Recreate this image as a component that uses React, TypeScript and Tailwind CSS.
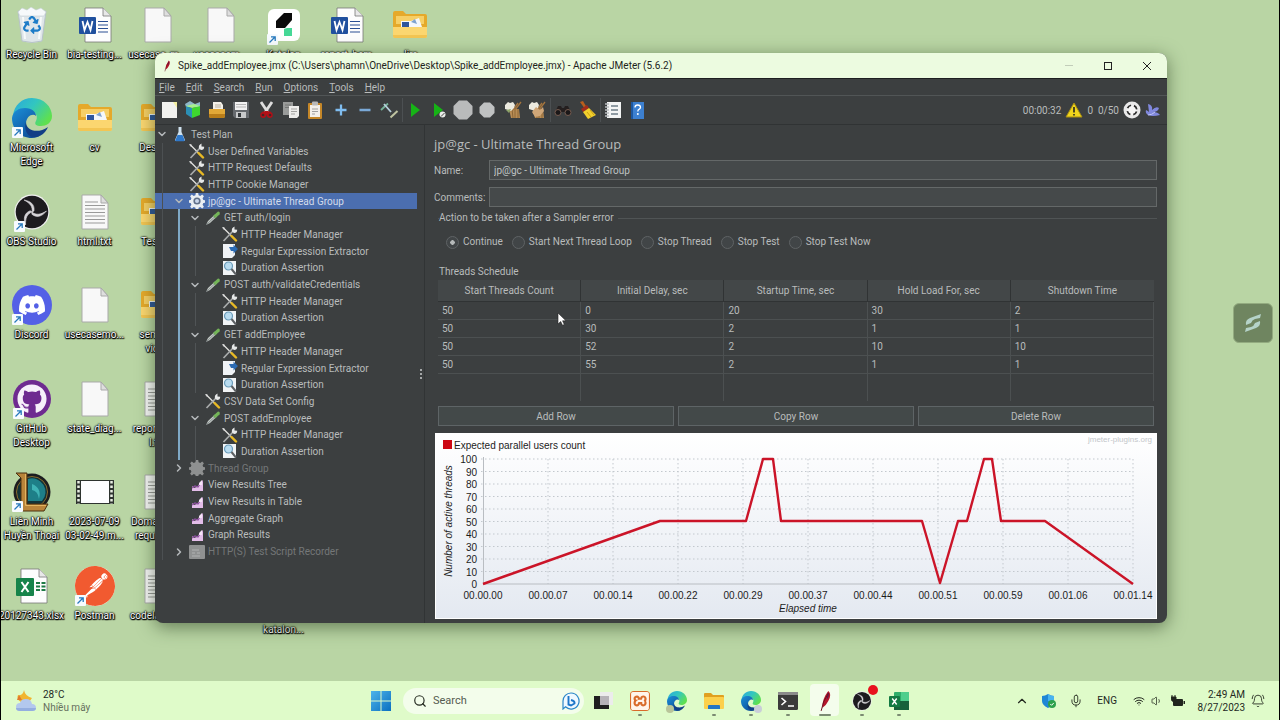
import React, { useState } from "react";
import { FaGithub, FaRecycle } from "react-icons/fa";
import { SiDiscord, SiPostman, SiXampp } from "react-icons/si";
import { Mic, Search, Wifi, Volume1, ChevronUp, ChevronDown, ChevronRight, BellRing } from "lucide-react";

/* ---------- desktop icons ---------- */

function Shortcut() {
  return (
    <svg viewBox="0 0 11 11" className="absolute bottom-0 left-0 size-[11px]">
      <rect width="11" height="11" rx="1" fill="#f7fbff" />
      <path d="M2.5 8.5 L8 3 M4 2.8 H8.2 V7" stroke="#2779bd" strokeWidth="1.3" fill="none" />
    </svg>
  );
}

function Folder() {
  return (
    <svg viewBox="0 0 36 30" className="h-[30px] w-9">
      <path d="M1 3 q0-2 2-2 h8 l3 3 h19 q2 0 2 2 v20 H1z" fill="#e5a92b" />
      <path d="M4 6 h28 v8 H4z" fill="#f6cf66" />
      <path d="M9 11 h10 l8-3 l3 9 h-21z" fill="#f4f7fb" />
      <rect x="10" y="12" width="7" height="6" fill="#2f569b" />
      <path d="M19 12 l4-3 l2 5z" fill="#7ea2cf" />
      <path d="M1 17 h34 v9 q0 2-2 2 H3 q-2 0-2-2z" fill="#fbd670" />
      <path d="M1 25 h34 v1 q0 2-2 2 H3 q-2 0-2-2z" fill="#f3c553" />
    </svg>
  );
}

function Page({ lines = false }: { lines?: boolean }) {
  return (
    <svg viewBox="0 0 28 36" className="h-9 w-7">
      <path d="M1 1 h19 l7 8 v26 H1z" fill="#f8f8f8" stroke="#a9a9a9" strokeWidth="1" />
      <path d="M20 1 v8 h7z" fill="#dedede" stroke="#a9a9a9" strokeWidth="1" />
      {lines && <path d="M4 8 h13 M4 11.500 h20 M4 15 h20 M4 18.500 h20 M4 22 h20 M4 25.500 h20 M4 29 h20" stroke="#999" />}
    </svg>
  );
}

function Word() {
  return (
    <svg viewBox="0 0 34 36" className="h-9 w-[34px]">
      <path d="M7 1 h18 l8 8 v26 H7z" fill="#fdfdfd" stroke="#777" strokeWidth=".8" />
      <path d="M25 1 v8 h8" fill="#e8e8e8" stroke="#777" strokeWidth=".8" />
      <path d="M20 14.500 h10 M20 18 h10 M20 21.500 h10 M20 25 h10" stroke="#2b4f94" strokeWidth="1.2" />
      <rect x="1" y="10" width="17" height="17" rx="1" fill="#20509e" />
      <path d="M4.500 14 l2 9 l3-8 l3 8 l2-9" stroke="#fff" strokeWidth="1.8" fill="none" />
    </svg>
  );
}

function Excel() {
  return (
    <svg viewBox="0 0 32 36" className="h-9 w-8">
      <path d="M5 1 h18 l8 8 v26 H5z" fill="#fdfdfd" stroke="#777" strokeWidth=".8" />
      <path d="M23 1 v8 h8" fill="#e8e8e8" stroke="#777" strokeWidth=".8" />
      <path d="M20 15 h4 M25.500 15 h4 M20 18.500 h4 M25.500 18.500 h4 M20 22 h4 M25.500 22 h4" stroke="#1d7a45" strokeWidth="1.8" />
      <rect x="0" y="10" width="18" height="18" rx="1" fill="#16834a" />
      <path d="M5.500 14 l7 10 M12.500 14 l-7 10" stroke="#fff" strokeWidth="2" />
    </svg>
  );
}

function Edge({ id, className }: { id: string; className: string }) {
  return (
    <svg viewBox="0 0 40 40" className={className}>
      <defs>
        <linearGradient id={id + "a"} x1="0" y1="0" x2="1" y2=".6">
          <stop offset="0" stopColor="#2aa7dc" />
          <stop offset=".5" stopColor="#32c6c0" />
          <stop offset="1" stopColor="#5fe04f" />
        </linearGradient>
        <linearGradient id={id + "b"} x1="0" y1="0" x2=".8" y2="1">
          <stop offset="0" stopColor="#1b8fd8" />
          <stop offset="1" stopColor="#0d4a94" />
        </linearGradient>
      </defs>
      <path d="M1 18 C2 7 10 0 20 0 C32 0 40 9 40 18 C40 25 34 28 29 28 C24 28 22 26 24 23 C27 17 22 12 15 12 C9 12 4 15 1 18z" fill={`url(#${id}a)`} />
      <path d="M0 20 C1 13 7 10 13 10 C20 10 24 14 24 18 C21 15 14 18 14 26 C14 34 22 40 29 37 C26 39 23 40 20 40 C8 40 0 31 0 20z" fill={`url(#${id}b)`} />
      <path d="M14 24 C14 33 26 36 36 29 C33 36 27 40 20 39 C14 37 12 30 14 24z" fill="#123f86" />
    </svg>
  );
}

function RecycleBin() {
  return (
    <div className="relative flex h-9 w-[30px] items-center justify-center">
      <svg viewBox="0 0 30 36" className="absolute inset-0 h-9 w-[30px]">
        <path d="M1 4 L29 4 L25 34 Q15 37 5 34z" fill="#dfe6ea" stroke="#b7c3c9" />
        <path d="M1 5 l4-4 l5 2 l4-3 l5 3 l5-2 l5 4 l-2 4 h-24z" fill="#f6f9fb" stroke="#c5ced3" strokeWidth=".6" />
        <path d="M6 10 l2 22 M24 10 l-2 22" stroke="#f7fafb" strokeWidth="2" />
      </svg>
      <FaRecycle className="relative size-[18px] text-[#1d7cc8]" />
    </div>
  );
}

function Katalon() {
  return (
    <svg viewBox="0 0 34 34" className="h-[34px] w-[34px]">
      <rect x="1" y="1" width="32" height="32" rx="6" fill="#fff" />
      <path d="M9 13 L17 5 H25 V12 L18 20 H9z" fill="#0b0b0b" />
      <path d="M17 21 l3-1 h5 v8 h-8z" fill="#45d896" />
    </svg>
  );
}

function League() {
  return (
    <svg viewBox="0 0 40 40" className="size-10">
      <circle cx="20" cy="20" r="18.500" fill="#1c1d1f" />
      <circle cx="20" cy="20" r="15.500" fill="#123338" stroke="#8a6b2c" strokeWidth="1" />
      <path d="M16 7 a13.500 13.500 0 0 1 14 22 H16z" fill="#1e7f88" />
      <path d="M20 12 q10 4 7 15 q-1-8-7-9z" fill="#3fb3b5" />
      <path d="M4 1 H15 V32 H36 L32 39 H6 L9 34 V6z" fill="#b9843a" stroke="#4a3010" strokeWidth="1" />
      <path d="M13.500 2 V33.500 H34" fill="none" stroke="#e3b45f" strokeWidth="1" />
    </svg>
  );
}

function Film() {
  return (
    <svg viewBox="0 0 40 26" className="h-[26px] w-10">
      <rect x="1" y="1" width="38" height="24" fill="#2d332f" />
      <rect x="6" y="2" width="28" height="22" fill="#fdfdff" />
      <path d="M3.500 2 V25 M36.500 2 V25" stroke="#e9efe4" strokeWidth="2.500" strokeDasharray="2.500 2" />
    </svg>
  );
}

function Obs({ className }: { className: string }) {
  return (
    <svg viewBox="0 0 36 36" className={className}>
      <circle cx="18" cy="18" r="17.500" fill="#f0f0f0" />
      <circle cx="18" cy="18" r="16.300" fill="#1d1b1f" />
      {["rotate(0 18 18)", "rotate(120 18 18)", "rotate(240 18 18)"].map((t) => (
        <path key={t} transform={t} d="M18 18 C19 13 16 9 10 6 C16 7 21 10 20 17z" fill="#d6d4d8" stroke="#d6d4d8" strokeWidth=".6" />
      ))}
    </svg>
  );
}

type Item = { col: string; row: string; label: string[]; icon: React.ReactNode; shortcut?: boolean };

const ITEMS: Item[] = [
  { col: "col-start-1", row: "row-start-1", label: ["Recycle Bin"], icon: <RecycleBin /> },
  { col: "col-start-1", row: "row-start-2", label: ["Microsoft", "Edge"], icon: <Edge id="d" className="size-10" />, shortcut: true },
  { col: "col-start-1", row: "row-start-3", label: ["OBS Studio"], icon: <Obs className="size-9" />, shortcut: true },
  {
    col: "col-start-1", row: "row-start-4", label: ["Discord"], shortcut: true,
    icon: <span className="flex size-10 items-center justify-center rounded-full bg-[#5460e6]"><SiDiscord className="size-[26px] text-white" /></span>,
  },
  {
    col: "col-start-1", row: "row-start-5", label: ["GitHub", "Desktop"], shortcut: true,
    icon: <span className="flex size-[38px] items-center justify-center rounded-full bg-[#6e2a90]"><FaGithub className="size-[30px] text-[#f6effa]" /></span>,
  },
  { col: "col-start-1", row: "row-start-6", label: ["Liên Minh", "Huyền Thoại"], icon: <League />, shortcut: true },
  { col: "col-start-1", row: "row-start-7", label: ["20127343.xlsx"], icon: <Excel /> },
  { col: "col-start-2", row: "row-start-1", label: ["bia-testing..."], icon: <Word /> },
  { col: "col-start-2", row: "row-start-2", label: ["cv"], icon: <Folder /> },
  { col: "col-start-2", row: "row-start-3", label: ["html.txt"], icon: <Page lines /> },
  { col: "col-start-2", row: "row-start-4", label: ["usecasemo..."], icon: <Page /> },
  { col: "col-start-2", row: "row-start-5", label: ["state_diag..."], icon: <Page /> },
  { col: "col-start-2", row: "row-start-6", label: ["2023-07-09", "03-02-49.m..."], icon: <Film /> },
  {
    col: "col-start-2", row: "row-start-7", label: ["Postman"], shortcut: true,
    icon: <span className="flex size-10 items-center justify-center rounded-full bg-white"><SiPostman className="size-full text-[#f15a30]" /></span>,
  },
  { col: "col-start-3", row: "row-start-1", label: ["usecase_m..."], icon: <Page /> },
  { col: "col-start-3", row: "row-start-2", label: ["Desktop"], icon: <Folder /> },
  { col: "col-start-3", row: "row-start-3", label: ["Testing"], icon: <Folder /> },
  { col: "col-start-3", row: "row-start-4", label: ["seminar", "video"], icon: <Folder /> },
  { col: "col-start-3", row: "row-start-5", label: ["report.html", "l.txt"], icon: <Page lines /> },
  { col: "col-start-3", row: "row-start-6", label: ["Domain_of_", "require.txt"], icon: <Page lines /> },
  { col: "col-start-3", row: "row-start-7", label: ["codelab.txt.."], icon: <Page lines /> },
  { col: "col-start-4", row: "row-start-1", label: ["usecasem..."], icon: <Page /> },
  { col: "col-start-5", row: "row-start-1", label: ["Katalon"], icon: <Katalon />, shortcut: true },
  { col: "col-start-5", row: "row-start-7", label: ["report", "katalon..."], icon: <Katalon /> },
  { col: "col-start-6", row: "row-start-1", label: ["report_bem"], icon: <Word /> },
  { col: "col-start-7", row: "row-start-1", label: ["Jira"], icon: <Folder /> },
];

function DesktopIcons() {
  return (
    <ul className="-ml-px grid h-[654px] w-max grid-cols-[repeat(7,63px)] grid-rows-7 text-[10px] leading-[14px] text-white [text-shadow:0_0_1px_#000,0_1px_1px_#000,1px_1px_1px_#000,0_0_2px_#000,0_0_2px_#000]">
      {ITEMS.map((it, i) => (
        <li key={i} className={"flex min-h-0 flex-col items-center pt-[5px] " + it.col + " " + it.row}>
          <span className="relative flex h-10 shrink-0 items-center justify-center">
            {it.icon}
            {it.shortcut && <Shortcut />}
          </span>
          <span className="mt-[3px] flex flex-col items-center whitespace-nowrap">
            {it.label.map((l) => <span key={l}>{l}</span>)}
          </span>
        </li>
      ))}
    </ul>
  );
}

/* ---------- window: title, menu, toolbar ---------- */

function Feather({ className }: { className: string }) {
  return (
    <svg viewBox="0 0 20 20" className={className}>
      <path d="M7.500 16 Q7.500 8 13 1 Q16.500 4 13 10 Q11 14 8 16z" fill="#b5162b" />
      <path d="M12.500 2 Q15 4 11.500 9z" fill="#5c1a4d" />
      <path d="M6.500 19 Q8 10 13 3" stroke="#6b1020" strokeWidth=".9" fill="none" />
    </svg>
  );
}

const T = "size-5";
const Shape = ({ children }: { children: React.ReactNode }) => <svg viewBox="0 0 20 20" className={T}>{children}</svg>;

const Gatling = ({ all = false }: { all?: boolean }) => (
  <Shape>
    <path d="M6 9 h10 l1 9 h-9z" fill="#b98d55" />
    <path d="M9 9 l1 9 M12 9 v9 M15 9 v9" stroke="#8d6636" />
    <path d="M12 10 L18 2 M10 10 L15 3" stroke="#a5753d" strokeWidth="1.300" />
    <path d="M2 5 l3-3 l2 1 l3-1 l2 3 l-1 3 l-3 3 l-3-1 l-3-1z" fill="#eceadf" />
    {all && <path d="M5 12 l4-5 l4 3 l3-3 l1 4 l-4 5 l-5 1z" fill="#cfa678" />}
    {!all && <path d="M3 10 l3 3 l2-4z" fill="#8ea46a" />}
  </Shape>
);

const TOOLS: { name: string; icon: React.ReactNode }[][] = [
  [
    { name: "New", icon: <Shape><path d="M3 2 h15 v16 H3z" fill="#f1f1ee" /><path d="M14 2 h4 v6z" fill="#f3eea0" /></Shape> },
    { name: "Templates", icon: <Shape><path d="M2 4 l5-3 l5 3 l5-2 v5 H3z" fill="#8fb7c9" /><path d="M3 6 l6 2 v10 l-6-4z" fill="#2b8fb5" /><path d="M9 8 l8-2 v9 l-8 3z" fill="#3ed62f" /><path d="M3 6 l8-2 l6 2 l-8 2z" fill="#a6f08d" /></Shape> },
    { name: "Open", icon: <Shape><path d="M6 2 h8 l2 3 v6 H6z" fill="#f4f0e8" /><path d="M8 5 h6 M8 7 h6" stroke="#b9b0a0" /><path d="M2 9 h16 v7 q0 2-2 2 H4 q-2 0-2-2z" fill="#e2a837" /><path d="M2 14 h16 v2 q0 2-2 2 H4 q-2 0-2-2z" fill="#b97d19" /></Shape> },
    { name: "Save", icon: <Shape><path d="M2 2 h16 v16 H4 l-2-2z" fill="#65696d" /><rect x="4" y="2" width="12" height="8" fill="#f2f2f2" /><path d="M5 4.500 h10 M5 7 h10" stroke="#b5b5b5" /><rect x="5" y="12" width="10" height="6" fill="#c7c9ca" /><rect x="7" y="13" width="3" height="4" fill="#33373a" /></Shape> },
  ],
  [
    { name: "Cut", icon: <Shape><path d="M4 2 L11 12.500 M15 2 L8 12.500" stroke="#dedede" strokeWidth="2.800" /><path d="M9.500 11 q-4.500-.5-6 2.500 q-1 4 2.500 4.500 q3 0 3.500-3.500 q.5 3.500 3.500 3.500 q3.500-.5 2.500-4.500 q-1.500-3-6-2.500z" fill="#b40f16" /><circle cx="6" cy="15" r="1.300" fill="#4a2225" /><circle cx="13" cy="15" r="1.300" fill="#4a2225" /></Shape> },
    { name: "Copy", icon: <Shape><rect x="2" y="2" width="10" height="13" fill="#999b9a" /><path d="M4 5 h6 M4 7.500 h6" stroke="#747675" /><path d="M8 6 h10 v10 l-2 2 H8z" fill="#eeeeec" /><path d="M10 9 h6 M10 11.500 h6 M10 14 h4" stroke="#a3a3a1" /></Shape> },
    { name: "Paste", icon: <Shape><rect x="3" y="3" width="14" height="16" rx="1" fill="#c58728" /><rect x="5" y="5" width="10" height="12" fill="#f3f0ea" /><rect x="7" y="1.500" width="6" height="4" rx="1" fill="#b9b9b9" /><path d="M7 9 h6 M7 11.500 h6 M7 14 h3" stroke="#a0a0a0" /></Shape> },
  ],
  [
    { name: "Expand All", icon: <Shape><path d="M10 4.500 v11 M4.500 10 h11" stroke="#7fbdf0" strokeWidth="2.300" /></Shape> },
    { name: "Collapse All", icon: <Shape><path d="M4.500 10 h11" stroke="#7aa9d6" strokeWidth="2.300" /></Shape> },
    { name: "Toggle", icon: <Shape><path d="M2 10 L9 3.500" stroke="#76b39a" strokeWidth="1.800" /><path d="M5 4 L12 12" stroke="#b7cfdc" strokeWidth="1.800" /><path d="M11.500 17.500 L18.500 11" stroke="#bfc4a2" strokeWidth="2" /></Shape> },
  ],
  [
    { name: "Start", icon: <Shape><path d="M6 3 L15 10 L6 17z" fill="#16b316" /></Shape> },
    { name: "Start no pauses", icon: <Shape><path d="M5 3 L14 10 L5 17z" fill="#16b316" /><circle cx="13.500" cy="14.500" r="3" fill="#e9ece9" /><path d="M12 16.500 l3.500-3.500" stroke="#444" /></Shape> },
    { name: "Stop", icon: <Shape><path d="M6 .5 h8 l5.500 5.500 v8 l-5.500 5.500 H6 L.5 14 V6z" fill="#b9bbbb" /></Shape> },
    { name: "Shutdown", icon: <Shape><path d="M7 2.500 h6 l4.500 4.500 v6 l-4.500 4.500 H7 L2.500 13 V7z" fill="#c0c2c2" /></Shape> },
  ],
  [
    { name: "Clear", icon: <Gatling /> },
    { name: "Clear All", icon: <Gatling all /> },
  ],
  [
    { name: "Search Tree", icon: <Shape><path d="M5 6 h3 l1 2 h2 l1-2 h3 l3 6 H2z" fill="#241f1f" /><circle cx="5" cy="12.500" r="3" fill="#1a1718" stroke="#765c50" /><circle cx="15" cy="12.500" r="3" fill="#1a1718" stroke="#765c50" /></Shape> },
    { name: "Reset Search", icon: <Shape><path d="M3 2 l3-1 l4 7 l-2 1z" fill="#b85e1d" /><path d="M4 9 l6-4 l2 3 l-6 4z" fill="#a32c1b" /><path d="M6 12 l6-4 l7 7 l-8 4z" fill="#f2cf2c" /><path d="M10 12 l4 5 M13 10 l4 5" stroke="#c79d16" /></Shape> },
  ],
  [
    { name: "Function Helper", icon: <Shape><rect x="4" y="2" width="14" height="16" fill="#f3f4f4" /><path d="M2 4 h4 M2 7 h4 M2 10 h4 M2 13 h4 M2 16 h4" stroke="#b8bcbe" strokeWidth="1.300" /><path d="M8 6 h7 M8 10 h7 M8 14 h7" stroke="#6e7c86" strokeWidth="1.300" /></Shape> },
    { name: "Help", icon: <Shape><path d="M4 2 h13 v17 H4z" fill="#3d80d0" /><path d="M4 2 h2 v17 H4z" fill="#1d57a0" /><path d="M8 7.500 q0-2.500 2.700-2.500 q2.800 0 2.800 2.300 q0 1.400-1.500 2.100 q-1.200.6-1.200 2.100" fill="none" stroke="#fff" strokeWidth="1.300" /><circle cx="10.800" cy="14" r="1" fill="#fff" /></Shape> },
  ],
];

const MENUS: [string, string][] = [["F", "ile"], ["E", "dit"], ["S", "earch"], ["R", "un"], ["O", "ptions"], ["T", "ools"], ["H", "elp"]];

function TitleBar() {
  return (
    <header className="flex h-[25px] shrink-0 items-center bg-[#ecfbe0] pl-[6px] text-[#1e241b]">
      <Feather className="mr-[5px] size-3" />
      <h1 className="flex-1 truncate text-[10px]">Spike_addEmployee.jmx (C:\Users\phamn\OneDrive\Desktop\Spike_addEmployee.jmx) - Apache JMeter (5.6.2)</h1>
      <button aria-label="Minimize" className="flex h-full w-[39px] items-center justify-center"><span className="h-px w-2 bg-[#c2cdb9]" /></button>
      <button aria-label="Maximize" className="flex h-full w-[39px] items-center justify-center"><span className="size-2 border border-[#222]" /></button>
      <button aria-label="Close" className="flex h-full w-10 items-center justify-center">
        <svg viewBox="0 0 8 8" className="size-2"><path d="M0 0 L8 8 M8 0 L0 8" stroke="#222" /></svg>
      </button>
    </header>
  );
}

function ToolBar() {
  return (
    <div className="flex h-[29px] shrink-0 items-center border-b border-[#303334] px-0.5">
      <div className="flex items-center gap-0.5">
        {TOOLS.map((g, i) => (
          <div key={i} className={"flex " + (i === 3 || i > 4 ? "[box-shadow:-1px_0_0_#4c5052]" : "")}>
            {g.map((t) => (
              <button key={t.name} aria-label={t.name} className="flex h-6 w-6 items-center justify-center">{t.icon}</button>
            ))}
          </div>
        ))}
      </div>
      <div className="ml-auto flex items-center text-[10px]">
        <span>00:00:32</span>
        <svg viewBox="0 0 18 16" className="ml-1 h-4 w-[18px]"><path d="M9 1 L17 15 H1z" fill="#f1d51c" stroke="#a98f12" /><path d="M9 5 v5.500 M9 12 v1.500" stroke="#222" strokeWidth="1.600" /></svg>
        <span className="ml-1">0</span>
        <span className="ml-[5px]">0/50</span>
        <svg viewBox="0 0 18 18" className="ml-1 size-[18px]">
          <circle cx="9" cy="9" r="8.500" fill="#e9e9e9" />
          <circle cx="9" cy="9" r="4.800" fill="#f6f6f6" stroke="#2b2b2b" strokeWidth="1.700" strokeDasharray="4.500 3.040" strokeDashoffset="-1.500" />
        </svg>
        <svg viewBox="0 0 16 14" className="mr-1 ml-1 h-3.5 w-4"><path d="M3 1 q5 1 4 6 q4-4 7-2 q-1 4-6 4 q5 0 7 3 q-8 2-12 0 q-3-2-2-5 q2 1 3 2z" fill="#8088dd" /><path d="M3 12 q4 0 7-3" stroke="#c0c6f5" fill="none" /></svg>
      </div>
    </div>
  );
}

/* ---------- tree ---------- */

type Kind = "plan" | "config" | "group" | "groupOff" | "sampler" | "regex" | "assert" | "listener" | "recorder";

function TreeIcon({ kind }: { kind: Kind }) {
  const gear = "M6.800 0 h2.400 l.4 2.200 l1.700.7 l1.900-1.300 l1.700 1.700 l-1.300 1.900 l.7 1.700 l2.200.4 v2.400 l-2.200.4 l-.7 1.700 l1.300 1.900 l-1.700 1.700 l-1.900-1.300 l-1.700.7 l-.4 2.200 h-2.400 l-.4-2.200 l-1.700-.7 l-1.900 1.300 l-1.700-1.700 l1.300-1.900 l-.7-1.700 l-2.200-.4 v-2.400 l2.200-.4 l.7-1.700 l-1.300-1.900 l1.700-1.700 l1.900 1.300 l1.700-.7z";
  return (
    <svg viewBox="0 0 16 16" className="size-4 shrink-0">
      {kind === "plan" && (<><path d="M6.500 1 h3 v5 l3.500 8 q0 1-1 1 H4 q-1 0-1-1 l3.500-8z" fill="#cfe2ef" /><path d="M5.500 9 h5 l2.300 5.500 q-.3.700-1 .7 H4 q-.8 0-.8-.7z" fill="#2f78c9" /></>)}
      {kind === "config" && (<>
        <path d="M1 1.500 L13.500 14" stroke="#e4e4e0" strokeWidth="1.200" />
        <path d="M9.500 10 L14 14.500" stroke="#e8b923" strokeWidth="2.400" strokeLinecap="round" />
        <path d="M1.500 15 L11.500 4.500" stroke="#a9acac" strokeWidth="1.700" />
        <path d="M10 5.500 q-1-3.500 2.500-5 l0 3 l2.700.2 q0 3.300-3.200 3.200z" fill="#e6e8e8" />
        <path d="M0 1 l2.500.6 l.6 2.300 l-1.500-.4z" fill="#d5d5d5" />
      </>)}
      {kind === "group" && (<><path d={gear} fill="#e9eef2" /><circle cx="8" cy="8" r="3.600" fill="#5f6f88" /><circle cx="8" cy="8" r="2" fill="#c9d6ea" /></>)}
      {kind === "groupOff" && <path d={gear} fill="#8e9090" />}
      {kind === "sampler" && (<><path d="M1 15 L3 11 L10 4.500 L12 6.500 L5 13z" fill="#c6ccc8" /><path d="M8 6 L13 1.500 q2.500 0 1.500 3 L10 8.500z" fill="#74b558" /><path d="M1 15 L10 6.500" stroke="#70797a" strokeWidth=".7" /></>)}
      {kind === "regex" && (<><path d="M1 1 h12 v11 l-3 3 H1z" fill="#f0f3f6" /><path d="M7 4 h4.500 V1.500 L16 6 l-4.500 4.500 V8 H9z" fill="#2c6bb3" /></>)}
      {kind === "assert" && (<><path d="M1 1 h13 v14 H1z" fill="#f1f4f6" /><circle cx="6.500" cy="6" r="4" fill="#b9dcf0" stroke="#6a9cba" strokeWidth="1.200" /><path d="M9.500 9 L14 14.500" stroke="#5b5f62" strokeWidth="2" /></>)}
      {kind === "listener" && (<><path d="M3 9 V14 H14 V3 l-3 3 l-3 4 l-3 1z" fill="#e3bde9" /><path d="M3 11 l3-2 l3 1 l4-6" stroke="#8d4fa0" strokeWidth="1.200" fill="none" /><path d="M10 6 l3-3 v5 h-3z" fill="#f4e3f6" /></>)}
      {kind === "recorder" && (<><rect x="0" y="1" width="16" height="14" rx="1" fill="#8f9191" /><path d="M3 6 h7 M3 9 h3 M8 9 h3 M3 12 h8" stroke="#a6a8a8" strokeWidth="1.300" /></>)}
    </svg>
  );
}

type Node = { d: number; label: string; kind: Kind; open?: boolean; off?: boolean };

const NODES: Node[] = [
  { d: 0, label: "Test Plan", kind: "plan", open: true },
  { d: 1, label: "User Defined Variables", kind: "config" },
  { d: 1, label: "HTTP Request Defaults", kind: "config" },
  { d: 1, label: "HTTP Cookie Manager", kind: "config" },
  { d: 1, label: "jp@gc - Ultimate Thread Group", kind: "group", open: true },
  { d: 2, label: "GET auth/login", kind: "sampler", open: true },
  { d: 3, label: "HTTP Header Manager", kind: "config" },
  { d: 3, label: "Regular Expression Extractor", kind: "regex" },
  { d: 3, label: "Duration Assertion", kind: "assert" },
  { d: 2, label: "POST auth/validateCredentials", kind: "sampler", open: true },
  { d: 3, label: "HTTP Header Manager", kind: "config" },
  { d: 3, label: "Duration Assertion", kind: "assert" },
  { d: 2, label: "GET addEmployee", kind: "sampler", open: true },
  { d: 3, label: "HTTP Header Manager", kind: "config" },
  { d: 3, label: "Regular Expression Extractor", kind: "regex" },
  { d: 3, label: "Duration Assertion", kind: "assert" },
  { d: 2, label: "CSV Data Set Config", kind: "config" },
  { d: 2, label: "POST addEmployee", kind: "sampler", open: true },
  { d: 3, label: "HTTP Header Manager", kind: "config" },
  { d: 3, label: "Duration Assertion", kind: "assert" },
  { d: 1, label: "Thread Group", kind: "groupOff", open: false, off: true },
  { d: 1, label: "View Results Tree", kind: "listener" },
  { d: 1, label: "View Results in Table", kind: "listener" },
  { d: 1, label: "Aggregate Graph", kind: "listener" },
  { d: 1, label: "Graph Results", kind: "listener" },
  { d: 1, label: "HTTP(S) Test Script Recorder", kind: "recorder", open: false, off: true },
];

const GUIDES = [
  { width: "w-[17px]", line: "w-px bg-[#4c5052]" },
  { width: "w-4", line: "w-0.5 bg-[#7fa9c6]" },
  { width: "w-[17px]", line: "w-px bg-[#505456]" },
];

function Tree() {
  return (
    <nav className="w-[262px] shrink-0 pt-px">
      <ul className="grid h-[434px] auto-rows-fr text-[10px]">
        {NODES.map((n, i) => (
          <li key={i} className={"flex min-h-0 items-center " + (i === 4 ? "bg-[#4b6eaf] text-[#d3dcec]" : n.off ? "text-[#747778]" : "")}>
            {GUIDES.slice(0, n.d).map((g, k) => (
              <span key={k} className={"flex shrink-0 justify-center self-stretch pr-[3px] " + g.width}><span className={g.line} /></span>
            ))}
            <span className="flex w-3.5 shrink-0 justify-center text-[#b4b8ba]">
              {n.open === true && <ChevronDown className="size-3" strokeWidth={3} />}
              {n.open === false && <ChevronRight className="size-3" strokeWidth={3} />}
            </span>
            <span className="ml-[3px] flex"><TreeIcon kind={n.kind} /></span>
            <span className="ml-[3px] whitespace-nowrap">{n.label}</span>
          </li>
        ))}
      </ul>
    </nav>
  );
}

/* ---------- editor panel ---------- */

const ACTIONS = ["Continue", "Start Next Thread Loop", "Stop Thread", "Stop Test", "Stop Test Now"];
const HEAD = ["Start Threads Count", "Initial Delay, sec", "Startup Time, sec", "Hold Load For, sec", "Shutdown Time"];
const ROWS = [["50", "0", "20", "30", "2"], ["50", "30", "2", "1", "1"], ["50", "52", "2", "10", "10"], ["50", "55", "2", "1", "1"]];
const TIMES = ["00.00.00", "00.00.07", "00.00.14", "00.00.22", "00.00.29", "00.00.37", "00.00.44", "00.00.51", "00.00.59", "00.01.06", "00.01.14"];

function Chart() {
  return (
    <svg viewBox="0 0 722 186" className="block w-full" fontFamily="'Liberation Sans', sans-serif" fontSize="10" fill="#1c1c1c" role="img" aria-label="Expected parallel users count">
      <defs>
        <linearGradient id="sky" x1="0" y1="0" x2="0" y2="1">
          <stop offset="0" stopColor="#ffffff" />
          <stop offset="1" stopColor="#e4e9f1" />
        </linearGradient>
      </defs>
      <rect width="722" height="186" fill="#fff" />
      <rect x="1" y="1" width="720" height="184" fill="url(#sky)" />
      <rect x="8" y="7" width="9" height="9" fill="#cc0814" />
      <text x="19" y="16">Expected parallel users count</text>
      <text x="717" y="9" fontSize="8" textAnchor="end" fill="#c3c6ca">jmeter-plugins.org</text>
      {Array.from({ length: 11 }, (_, i) => {
        const y = 151 - i * 12.5;
        return (
          <g key={i}>
            {i > 0 && <path d={`M46 ${y} H698`} stroke="#c3c8ce" strokeDasharray="1.500 2.500" />}
            <text x="42" y={y + 4} textAnchor="end">{i * 10}</text>
          </g>
        );
      })}
      {TIMES.map((t, i) => (
        <g key={t}>
          {i > 0 && <path d={`M${48 + i * 65} 26 V151`} stroke="#c3c8ce" strokeDasharray="1.500 2.500" />}
          <text x={48 + i * 65} y="166" textAnchor="middle">{t}</text>
        </g>
      ))}
      <path d="M48.500 24 V151 H698" fill="none" stroke="#b9bdc2" />
      <text x="373" y="179" textAnchor="middle" fontStyle="italic">Elapsed time</text>
      <text transform="translate(17 88) rotate(-90)" textAnchor="middle" fontStyle="italic">Number of active threads</text>
      <path d="M48 151 L225 88 H311 L328 26 H338 L346 88 H487 L505 150 L523 88 H532 L549 26 H557 L566 88 H610 L698 151" fill="none" stroke="#cb1428" strokeWidth="2.400" strokeLinejoin="round" />
    </svg>
  );
}

function Editor() {
  const [name, setName] = useState("jp@gc - Ultimate Thread Group");
  const [comments, setComments] = useState("");
  const [action, setAction] = useState("Continue");
  const field = "h-5 min-w-0 flex-1 border border-[#646868] bg-[#45494a] px-1 text-[#bfc3c3] outline-none";
  return (
    <main className="flex min-w-0 flex-1 flex-col border-l border-[#313435] pr-2.5 pl-[9px] text-[10px]">
      <h2 className="mt-2.5 font-['Open_Sans','Noto_Sans',sans-serif] text-[13px] leading-[18px]">jp@gc - Ultimate Thread Group</h2>
      <div className="mt-[7px] flex items-center">
        <label htmlFor="name" className="w-[55px]">Name:</label>
        <input id="name" className={field} value={name} onChange={(e) => setName(e.target.value)} />
      </div>
      <div className="mt-[7px] flex items-center">
        <label htmlFor="comments" className="w-[55px]">Comments:</label>
        <input id="comments" className={field} value={comments} onChange={(e) => setComments(e.target.value)} />
      </div>
      <fieldset className="mt-1 ml-1 border-t border-[#505455]">
        <legend className="ml-px pr-1 leading-[14px]">Action to be taken after a Sampler error</legend>
        <div className="mt-2 ml-2 flex gap-[9px] leading-[18px]">
          {ACTIONS.map((a) => (
            <label key={a} className="flex items-center gap-1">
              <input
                type="radio" name="action" checked={action === a} onChange={() => setAction(a)}
                className="size-[13px] appearance-none rounded-full border border-[#5f6365] bg-[#414547] checked:bg-[radial-gradient(circle,#b5b9b9_0_2px,#414547_2.5px)]"
              />
              {a}
            </label>
          ))}
        </div>
      </fieldset>
      <section className="mt-3.5 mr-[3px] ml-1">
        <h3 className="ml-px leading-[14px]">Threads Schedule</h3>
        <table className="mt-px w-full table-fixed border-separate border-spacing-0">
          <thead>
            <tr>{HEAD.map((h) => <th key={h} className="h-[22px] border-r border-b border-[#303334] bg-[#434748] p-0 font-normal last:border-r-0">{h}</th>)}</tr>
          </thead>
          <tbody>
            {ROWS.map((r, i) => (
              <tr key={i}>{r.map((c, j) => <td key={j} className="h-[18px] border-r border-b border-[#4c5051] p-0 pl-1 leading-[14px]">{c}</td>)}</tr>
            ))}
            <tr>{HEAD.map((h) => <td key={h} className="h-[27px] border-r border-[#4c5051] p-0" />)}</tr>
          </tbody>
        </table>
        <div className="mt-[5px] grid grid-cols-3 gap-1">
          {["Add Row", "Copy Row", "Delete Row"].map((b) => (
            <button key={b} className="h-5 border border-[#5e6466] bg-[#434949]">{b}</button>
          ))}
        </div>
      </section>
      <div className="mt-[7px] ml-px"><Chart /></div>
    </main>
  );
}

function JMeterWindow() {
  return (
    <section className="absolute top-[53px] right-[112px] bottom-[58px] left-[154px] flex flex-col overflow-hidden rounded-lg bg-[#3c3f40] text-[#b9bcbc] shadow-[0_4px_18px_rgba(30,50,20,0.55)]">
      <TitleBar />
      <nav className="flex h-[18px] shrink-0 items-center gap-[11px] border-t border-b border-t-[#1d1f20] border-b-[#515556] pl-1 text-[10px]">
        {MENUS.map(([k, rest]) => <button key={k}><u>{k}</u>{rest}</button>)}
      </nav>
      <ToolBar />
      <div className="flex min-h-0 flex-1">
        <Tree />
        <div className="flex w-[7px] shrink-0 flex-col items-center justify-center gap-0.5">
          <span className="size-0.5 bg-[#a5a8a9]" />
          <span className="size-0.5 bg-[#a5a8a9]" />
          <span className="size-0.5 bg-[#a5a8a9]" />
        </div>
        <Editor />
      </div>
    </section>
  );
}

/* ---------- taskbar ---------- */

function Cell({ name, dot, active, children }: { name: string; dot?: boolean; active?: boolean; children: React.ReactNode }) {
  return (
    <button aria-label={name} className="relative flex h-full w-[37px] items-center justify-center">
      {active && <span className="absolute inset-x-1 top-[3px] bottom-1 rounded bg-[#f4fdec]" />}
      <span className="relative flex">{children}</span>
      {dot && <span className={"absolute bottom-1 h-0.5 rounded-full bg-[#7b8b72] " + (active ? "w-3" : "w-1")} />}
    </button>
  );
}

function TaskBar() {
  return (
    <footer className="grid h-[39px] shrink-0 grid-cols-[1fr_auto_1fr] items-center bg-[#dffbc9] text-[10px] text-[#23291f]">
      <div className="flex items-center gap-1.5 pl-3.5">
        <svg viewBox="0 0 22 24" className="h-6 w-[22px]">
          <path d="M9 1 q1 6 8 8 q-4 7-11 4 q-5-3-3-7 q5 1 6-5z" fill="#f1b52e" />
          <path d="M2 11 l2-5 l3 5z" fill="#e07a2c" />
          <path d="M5 22 q-4 0-4-4 q0-4 4-4 q1-4 6-4 q5 0 6 5 q4 0 4 4 q0 3-4 3z" fill="#b3c8ee" />
          <path d="M5 22 q-4 0-4-3 h20 q0 3-4 3z" fill="#94aee0" />
        </svg>
        <div className="leading-[13px]"><p>28°C</p><p className="text-[#66705e]">Nhiều mây</p></div>
      </div>
      <div className="flex h-[39px] items-center pl-2">
        <button aria-label="Start">
          <svg viewBox="0 0 20 20" className="size-5">
            <defs><linearGradient id="win" x1="0" y1="0" x2="1" y2="1"><stop offset="0" stopColor="#4fb4ea" /><stop offset="1" stopColor="#0a6fc0" /></linearGradient></defs>
            <path d="M0 0 h9.500 v9.500 H0z M10.500 0 H20 v9.500 h-9.500z M0 10.500 h9.500 V20 H0z M10.500 10.500 H20 V20 h-9.500z" fill="url(#win)" />
          </svg>
        </button>
        <label className="ml-3 flex h-[26px] w-[181px] items-center rounded-full bg-[#f3fdeb] pr-1 pl-2.5">
          <Search className="size-3.5 shrink-0" strokeWidth={2} />
          <input aria-label="Search" placeholder="Search" className="ml-1.5 min-w-0 flex-1 bg-transparent text-[11px] leading-[18px] outline-none placeholder:text-[#555c50]" />
          <svg viewBox="0 0 18 18" className="size-[18px]"><path d="M9 1 a8 8 0 1 1-5.500 13.800 L1 17 V9 a8 8 0 0 1 8-8z" fill="#eef8ff" stroke="#2a86c8" strokeWidth="1.200" /><path d="M6.500 4 V12.500 L9 13.500 L12.500 11.500 Q13 9 9 8" fill="none" stroke="#1b76c9" strokeWidth="1.900" /></svg>
        </label>
        <Cell name="Task view"><svg viewBox="0 0 20 20" className="size-5"><rect x="7" y="1" width="13" height="13" fill="#ececec" /><rect x="1" y="5" width="15" height="13" fill="#1f1f1f" /><rect x="7" y="5" width="9" height="9" fill="#b6b2b8" /></svg></Cell>
        <Cell name="XAMPP" dot><span className="flex size-5 items-center justify-center rounded-sm bg-[#d96b2a]"><SiXampp className="size-[18px] text-[#fff4ea]" /></span></Cell>
        <Cell name="Edge"><Edge id="t1" className="size-5" /><span className="absolute -bottom-0.5 -left-px size-2 rounded-full bg-[#b9c59a]" /></Cell>
        <Cell name="File Explorer" dot><svg viewBox="0 0 20 20" className="size-5"><path d="M0 3 q0-1 1-1 h6 l2 2 h10 q1 0 1 1 v12 H0z" fill="#e0a020" /><rect y="6" width="20" height="12" rx="1" fill="#fcd04b" /><path d="M4 18 v-3 q0-1 1-1 h10 q1 0 1 1 v3z" fill="#2476c4" /></svg></Cell>
        <Cell name="Edge profile" dot><Edge id="t2" className="size-5" /><span className="absolute -right-px -bottom-0.5 size-2 rounded-full bg-[#c9cdd8]" /></Cell>
        <Cell name="Terminal" dot><svg viewBox="0 0 20 18" className="h-[18px] w-5"><rect width="20" height="18" rx="1.500" fill="#3b3b3b" /><rect width="20" height="3" fill="#8b8b8b" /><path d="M3.500 6 l4 3.500 l-4 3.500 M10 14 h6" stroke="#fff" strokeWidth="1.600" fill="none" /></svg></Cell>
        <Cell name="Apache JMeter" dot active><Feather className="size-[22px]" /></Cell>
        <Cell name="OBS Studio" dot><Obs className="size-5" /><span className="absolute -top-1.5 -right-1.5 size-2.5 rounded-full bg-[#e8121d]" /></Cell>
        <Cell name="Excel" dot><svg viewBox="0 0 20 20" className="size-5"><rect x="5" y="1" width="15" height="18" rx="1" fill="#2fae6b" /><rect x="12" y="1" width="8" height="9" fill="#4fcf8c" /><rect x="5" y="10" width="15" height="9" fill="#17623b" /><rect y="5" width="11" height="11" rx="1" fill="#137a43" /><path d="M3.200 7.500 l4.500 6 M7.700 7.500 l-4.500 6" stroke="#fff" strokeWidth="1.400" /></svg></Cell>
      </div>
      <div className="flex items-center justify-end pr-3.5">
        <ChevronUp className="size-3.5" strokeWidth={2} />
        <svg viewBox="0 0 16 16" className="ml-3 size-4"><path d="M7 1 q3 2 6 2 v5 q0 4-6 7 q-6-3-6-7 V3 q3 0 6-2z" fill="#1f86d6" /><path d="M7 1 q3 2 6 2 v5 H7z" fill="#48b3ef" /><circle cx="11" cy="11" r="4" fill="#2da14b" /><path d="M9.300 11 l1.300 1.300 l2.200-2.400" stroke="#fff" fill="none" /></svg>
        <Mic className="ml-3 size-3.5" strokeWidth={1.5} />
        <span className="ml-3.5">ENG</span>
        <Wifi className="ml-4 size-3" strokeWidth={2} />
        <Volume1 className="ml-1.5 size-3" strokeWidth={1.5} />
        <svg viewBox="0 0 14 12" className="ml-2 h-3 w-3.5"><rect x="2" y="4" width="10" height="7" rx="1" fill="#20241d" /><rect x="12.500" y="6" width="1.500" height="3" fill="#20241d" /><path d="M0 2 h5 v3 q-2 2-4 1z M1 0 v3 M4 0 v3" fill="#20241d" stroke="#20241d" /></svg>
        <div className="ml-2.5 w-[50px] text-right leading-[13px]"><p>2:49 AM</p><p>8/27/2023</p></div>
        <BellRing className="ml-1.5 size-3.5" strokeWidth={1.5} />
      </div>
    </footer>
  );
}

export default function App() {
  return (
    <div className="flex h-screen flex-col overflow-hidden border-x border-black bg-[#b9d5a4] font-['Roboto','Open_Sans',sans-serif]">
      <div className="relative min-h-0 flex-1">
        <DesktopIcons />
        <JMeterWindow />
        <button aria-label="Assistant" className="absolute top-[303px] right-[6px] flex size-10 items-center justify-center rounded-md border border-[#93ab80] bg-[#6f8560]">
          <svg viewBox="0 0 20 22" className="h-[22px] w-5"><path d="M18 2 L7 6 Q2 8 3 13 L8 11 Q9 8 12 7 L17 6z" fill="#b5d3c9" /><path d="M2 20 L13 16 Q18 14 17 9 L12 11 Q11 14 8 15 L3 16z" fill="#b5d3c9" /></svg>
        </button>
        <svg viewBox="0 0 10 14" className="absolute top-[312px] left-[556px] h-3.5 w-2.5"><path d="M1 1 V12 L3.700 9.500 L5.500 13.300 L7.300 12.500 L5.600 8.800 H9z" fill="#fff" stroke="#222" strokeWidth=".6" /></svg>
      </div>
      <TaskBar />
    </div>
  );
}
